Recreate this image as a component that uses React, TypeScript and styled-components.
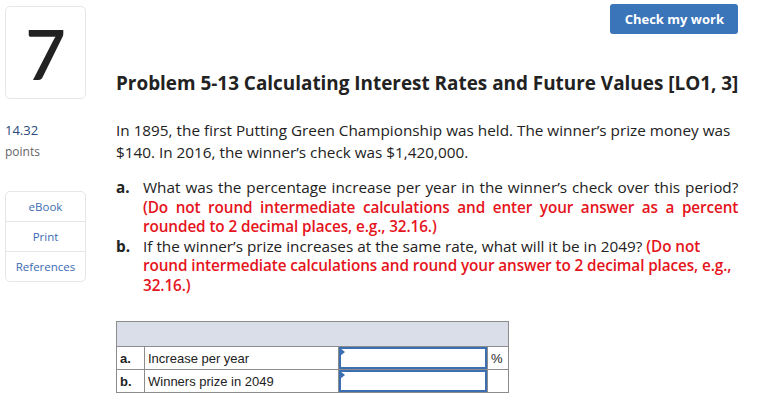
import styled, { createGlobalStyle } from "styled-components";

const GlobalStyle = createGlobalStyle`
  html, body {
    margin: 0;
    padding: 0;
    background: #ffffff;
  }
  body {
    font-family: "Open Sans", Lato, sans-serif;
    color: #222222;
  }
`;

const Page = styled.div`
  width: 762px;
  height: 412px;
  padding: 0 24px 0 5px;
  box-sizing: border-box;
  display: grid;
  grid-template-columns: 81px 1fr;
  column-gap: 30px;
  grid-template-rows: auto 1fr;
`;

const NumberBox = styled.div`
  margin-top: 6px;
  height: 93px;
  border: 1px solid #e6e6e6;
  border-radius: 5px;
  box-sizing: border-box;
  display: flex;
  align-items: center;
  justify-content: center;
  font-family: Lato, sans-serif;
  font-size: 70px;
  font-weight: 600;
  color: #222;
`;

const HeaderMain = styled.div`
  display: flex;
  flex-direction: column;
`;

const TopBar = styled.div`
  display: flex;
  justify-content: flex-end;
  padding-top: 4px;
`;

const CheckButton = styled.button`
  width: 128px;
  height: 30px;
  border: none;
  border-radius: 3px;
  background: #3a74b9;
  color: #fff;
  font-family: "Open Sans", sans-serif;
  font-weight: 700;
  font-size: 13px;
`;

const Title = styled.h1`
  margin: 37px 0 0;
  font-size: 18.9px;
  line-height: 24px;
  font-weight: 700;
  color: #222;
  white-space: nowrap;
`;

const Side = styled.div`
  padding-top: 22px;
  display: flex;
  flex-direction: column;
`;

const Score = styled.div`
  font-size: 13px;
  line-height: 18px;
  color: #2b4a7d;
`;

const ScoreLabel = styled.div`
  font-size: 12px;
  line-height: 18px;
  color: #666;
  margin-top: 4px;
`;

const NavBox = styled.div`
  margin-top: 30px;
  border: 1px solid #e6e6e6;
  border-radius: 5px;
  display: flex;
  flex-direction: column;
`;

const NavLink = styled.a`
  height: 29px;
  display: flex;
  align-items: center;
  justify-content: center;
  font-size: 11.5px;
  color: #3d6bb3;
  cursor: pointer;
  & + & {
    border-top: 1px solid #e6e6e6;
  }
`;

const Main = styled.div`
  padding-top: 20px;
`;

const Paragraph = styled.p`
  margin: 0;
  font-size: 15.3px;
  line-height: 22px;
  color: #222;
`;

const List = styled.div`
  margin-top: 15px;
`;

const Item = styled.div<{ $justify?: boolean }>`
  display: flex;
  font-size: 15.3px;
  line-height: 19.5px;
  text-align: ${(p) => (p.$justify ? "justify" : "left")};
`;

const ItemLabel = styled.span`
  width: 27px;
  flex-shrink: 0;
  font-weight: 700;
`;

const Warn = styled.span`
  color: #e5141c;
  font-weight: 600;
  letter-spacing: -0.1px;
`;

const Table = styled.table`
  margin-top: 26px;
  border-collapse: collapse;
  font-family: "Liberation Sans", Arial, sans-serif;
  font-size: 13px;
  color: #222;
`;

const HeadCell = styled.td`
  height: 22px;
  background: #d9dee8;
  border: 1px solid #8c8c8c;
`;

const Cell = styled.td<{ $w: number; $bold?: boolean }>`
  width: ${(p) => p.$w}px;
  height: 22px;
  padding: 0 0 0 3px;
  border: 1px solid #8c8c8c;
  font-weight: ${(p) => (p.$bold ? 700 : 400)};
  box-sizing: border-box;
`;

const InputCell = styled.td`
  width: 148px;
  height: 22px;
  padding: 0;
  border: 1px solid #8c8c8c;
  position: relative;
`;

const AnswerInput = styled.input`
  display: block;
  width: 100%;
  height: 22px;
  box-sizing: border-box;
  border: 2px solid #3b6fb2;
  margin: 0;
`;

const Flag = styled.span`
  position: absolute;
  left: 1px;
  top: 1px;
  width: 0;
  height: 0;
  border-top: 4px solid transparent;
  border-bottom: 4px solid transparent;
  border-left: 5px solid #3b6fb2;
`;

const rows = [
  { key: "a.", label: "Increase per year", unit: "%" },
  { key: "b.", label: "Winners prize in 2049", unit: "" },
];

export default function App() {
  return (
    <>
      <GlobalStyle />
      <Page>
        <NumberBox>7</NumberBox>
        <HeaderMain>
          <TopBar>
            <CheckButton>Check my work</CheckButton>
          </TopBar>
          <Title>Problem 5-13 Calculating Interest Rates and Future Values [LO1, 3]</Title>
        </HeaderMain>
        <Side>
          <Score>14.32</Score>
          <ScoreLabel>points</ScoreLabel>
          <NavBox>
            <NavLink>eBook</NavLink>
            <NavLink>Print</NavLink>
            <NavLink>References</NavLink>
          </NavBox>
        </Side>
        <Main>
          <Paragraph>
            In 1895, the first Putting Green Championship was held. The winner’s prize money was
            $140. In 2016, the winner’s check was $1,420,000.
          </Paragraph>
          <List>
            <Item $justify>
              <ItemLabel>a.</ItemLabel>
              <span>
                What was the percentage increase per year in the winner’s check over this period?{" "}
                <Warn>
                  (Do not round intermediate calculations and enter your answer as a percent
                  rounded to 2 decimal places, e.g., 32.16.)
                </Warn>
              </span>
            </Item>
            <Item>
              <ItemLabel>b.</ItemLabel>
              <span>
                If the winner’s prize increases at the same rate, what will it be in 2049?{" "}
                <Warn>
                  (Do not round intermediate calculations and round your answer to 2 decimal
                  places, e.g., 32.16.)
                </Warn>
              </span>
            </Item>
          </List>
          <Table>
            <tbody>
              <tr>
                <HeadCell colSpan={4} />
              </tr>
              {rows.map((r) => (
                <tr key={r.key}>
                  <Cell $w={28} $bold>
                    {r.key}
                  </Cell>
                  <Cell $w={194}>{r.label}</Cell>
                  <InputCell>
                    <AnswerInput type="text" />
                    <Flag />
                  </InputCell>
                  <Cell $w={21}>{r.unit}</Cell>
                </tr>
              ))}
            </tbody>
          </Table>
        </Main>
      </Page>
    </>
  );
}
